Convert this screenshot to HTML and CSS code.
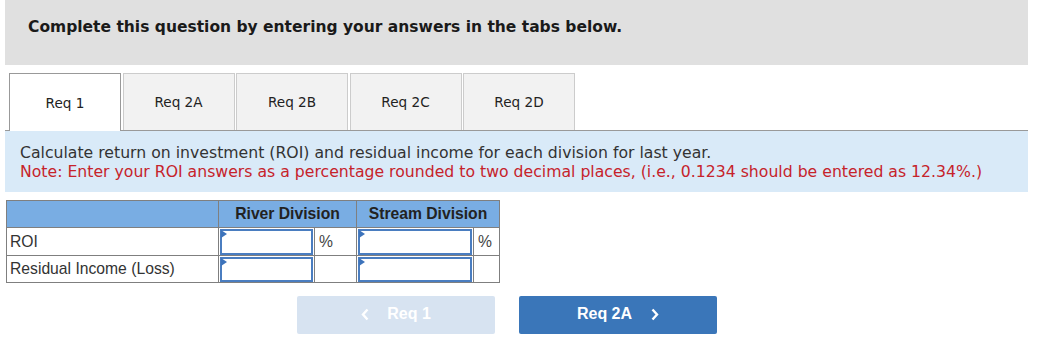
FILE: index.html
```html
<!DOCTYPE html>
<html>
  <head>
    <meta charset="utf-8">
    <title>Req 1</title>
    <link rel="stylesheet" href="styles.css">
  </head>
  <body>
    <div class="page">
      <div class="head">Complete this question by entering your answers in the tabs below.</div>

      <ul class="tabs">
        <li class="tab active">Req 1</li>
        <li class="tab">Req 2A</li>
        <li class="tab">Req 2B</li>
        <li class="tab">Req 2C</li>
        <li class="tab">Req 2D</li>
      </ul>

      <div class="info">
        <p>Calculate return on investment (ROI) and residual income for each division for last year.</p>
        <p class="note">Note: Enter your ROI answers as a percentage rounded to two decimal places, (i.e., 0.1234 should be entered as 12.34%.)</p>
      </div>

      <table class="grid">
        <colgroup>
          <col class="c-label">
          <col class="c-in1">
          <col class="c-pct1">
          <col class="c-in2">
          <col class="c-pct2">
        </colgroup>
        <tr class="hrow">
          <th></th>
          <th colspan="2">River Division</th>
          <th colspan="2">Stream Division</th>
        </tr>
        <tr class="r1">
          <td>ROI</td>
          <td class="cell"><div class="box"></div></td>
          <td class="pct">%</td>
          <td class="cell"><div class="box"></div></td>
          <td class="pct">%</td>
        </tr>
        <tr class="r2">
          <td>Residual Income (Loss)</td>
          <td class="cell"><div class="box"></div></td>
          <td class="pct"></td>
          <td class="cell"><div class="box"></div></td>
          <td class="pct"></td>
        </tr>
      </table>

      <div class="nav">
        <button class="btn prev">
          <svg class="chev left" width="8" height="13" viewBox="0 0 8 13"><path d="M6.5 1.5 L2 6.5 L6.5 11.5" fill="none" stroke="#fff" stroke-width="2.4"/></svg>
          Req 1
        </button>
        <button class="btn next">
          Req 2A
          <svg class="chev right" width="8" height="13" viewBox="0 0 8 13"><path d="M1.5 1.5 L6 6.5 L1.5 11.5" fill="none" stroke="#fff" stroke-width="2.4"/></svg>
        </button>
      </div>
    </div>
  </body>
</html>
```

FILE: styles.css
```css
*{
  margin: 0;
  padding: 0;
  box-sizing: border-box;
}
body{
  background: #fff;
  font-family: "DejaVu Sans", Verdana, sans-serif;
  color: #222;
}
.page{
  width: 1023px;
  margin-left: 5px;
}
.head{
  height: 65px;
  background: #e0e0e0;
  padding: 17px 0 0 23px;
  font-size: 15.5px;
  line-height: 20px;
  font-weight: bold;
  color: #1a1a1a;
}
.tabs{
  list-style: none;
  display: flex;
  gap: 1.5px;
  margin-top: 8px;
  padding-left: 4px;
  height: 58px;
  border-bottom: 1px solid #999;
}
.tab{
  width: 112px;
  height: 57px;
  background: #f2f2f2;
  border: 1px solid #ccc;
  border-bottom: none;
  display: flex;
  align-items: center;
  justify-content: center;
  font-size: 13.6px;
  color: #222;
}
.tab.active{
  background: #fff;
  border-color: #999;
  height: 58px;
}
.info{
  height: 61px;
  background: #d9eaf8;
  padding: 12px 0 0 15px;
  font-size: 15.7px;
  line-height: 19px;
  color: #333;
}
.note{
  color: #c6232b;
}
.grid{
  border-collapse: collapse;
  margin: 8px 0 0 1px;
  font-family: "Liberation Sans", Arial, sans-serif;
  font-size: 15.7px;
  color: #333;
  table-layout: fixed;
  width: 493px;
}
.c-label{ width: 212px; }
.c-in1{ width: 96px; }
.c-pct1{ width: 42px; }
.c-in2{ width: 117px; }
.c-pct2{ width: 26px; }
.grid th,
.grid td{
  border: 1px solid #7f7f7f;
}
.hrow th{
  background: #79ade3;
  height: 27px;
  font-weight: bold;
  color: #222;
  text-align: center;
  padding-top: 0;
}
.r1 td{ height: 28px; }
.r2 td{ height: 27px; }
.grid td{
  padding: 0 0 0 3px;
  text-align: left;
}
.grid td.cell{
  padding: 0;
}
.grid td.pct{
  padding-left: 4px;
  color: #444;
}
.box{
  position: relative;
  margin: 0 1px;
  border: 2px solid #4a7dc0;
  background: #fff;
}
.r1 .box{ height: 26px; }
.r2 .box{ height: 25px; }
.box::before{
  content: "";
  position: absolute;
  left: -1px;
  top: -1px;
  border-top: 4px solid transparent;
  border-bottom: 4px solid transparent;
  border-left: 6px solid #3d73bb;
}
.nav{
  display: flex;
  gap: 24px;
  margin: 13px 0 0 292px;
}
.btn{
  width: 198px;
  height: 38px;
  border: none;
  border-radius: 2px;
  font-family: "Liberation Sans", Arial, sans-serif;
  font-size: 16px;
  font-weight: bold;
  color: #fff;
  display: flex;
  align-items: center;
  justify-content: center;
  padding-bottom: 2px;
}
.prev{
  background: #d7e3f1;
}
.next{
  background: #3a76b9;
}
.chev{
  display: block;
}
.chev.left{ margin-right: 18px; }
.chev.right{ margin-left: 19px; }
```
